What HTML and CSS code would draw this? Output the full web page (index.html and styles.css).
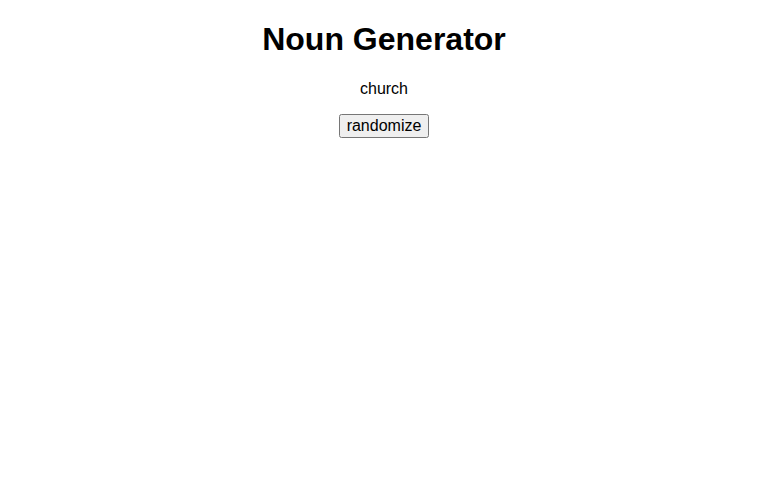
FILE: index.html
```html
<!DOCTYPE html>
<html lang="en">
<head>
	<meta charset="UTF-8">
	<title>Noun Generator</title>
	<link rel="stylesheet" href="styles.css">
</head>
<body>
	<h1>Noun Generator</h1>
	<p id="noun">church</p>
	<p><button id="btn">randomize</button></p>
	<script>
	var nouns = ['church','house','apple','river','table','garden','window','bird'];
	document.getElementById('btn').onclick = function () {
		var i = Math.floor(Math.random() * nouns.length);
		document.getElementById('noun').innerHTML = nouns[i];
	}
	</script>
</body>
</html>
```

FILE: styles.css
```css
body{
	margin: 0;
	font-family: "Liberation Sans", Arial, sans-serif;
	text-align: center;
}
button{
	font-family: "Liberation Sans", Arial, sans-serif;
	font-size: 16px;
}
```
